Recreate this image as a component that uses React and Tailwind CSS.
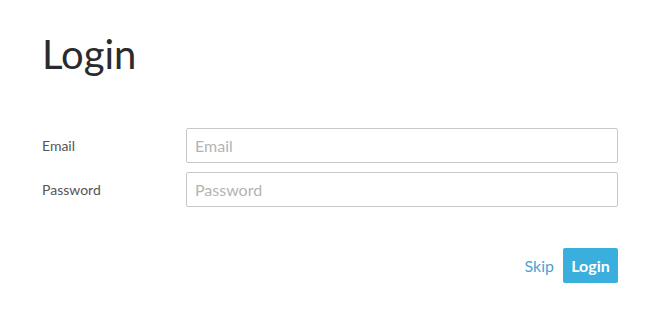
export default function App() {
  return (
    <div className="min-h-screen bg-white pl-[42px] pr-[46px] pt-[30px] font-['Lato',sans-serif] text-[#333]">
      <h1 className="text-[40px] leading-[48px] font-normal text-[#2b2b2b]">Login</h1>

      <form className="mt-[50px] flex flex-col gap-[9px]">
        <div className="flex items-center">
          <label className="w-[144px] text-[14px] text-[#555]">Email</label>
          <input
            type="email"
            placeholder="Email"
            className="h-[35px] flex-1 rounded-[2px] border border-[#c8c8c8] px-[8px] text-[16px] placeholder:text-[#b4b4b4] outline-none"
          />
        </div>
        <div className="flex items-center">
          <label className="w-[144px] text-[14px] text-[#555]">Password</label>
          <input
            type="password"
            placeholder="Password"
            className="h-[35px] flex-1 rounded-[2px] border border-[#c8c8c8] px-[8px] text-[16px] placeholder:text-[#b4b4b4] outline-none"
          />
        </div>

        <div className="mt-[32px] flex items-center justify-end gap-[9px]">
          <a href="#" className="text-[16px] text-[#4aa3d6]">Skip</a>
          <button
            type="button"
            className="h-[35px] w-[55px] rounded-[2px] bg-[#3aaedc] text-[16px] font-bold text-white"
          >
            Login
          </button>
        </div>
      </form>
    </div>
  )
}
